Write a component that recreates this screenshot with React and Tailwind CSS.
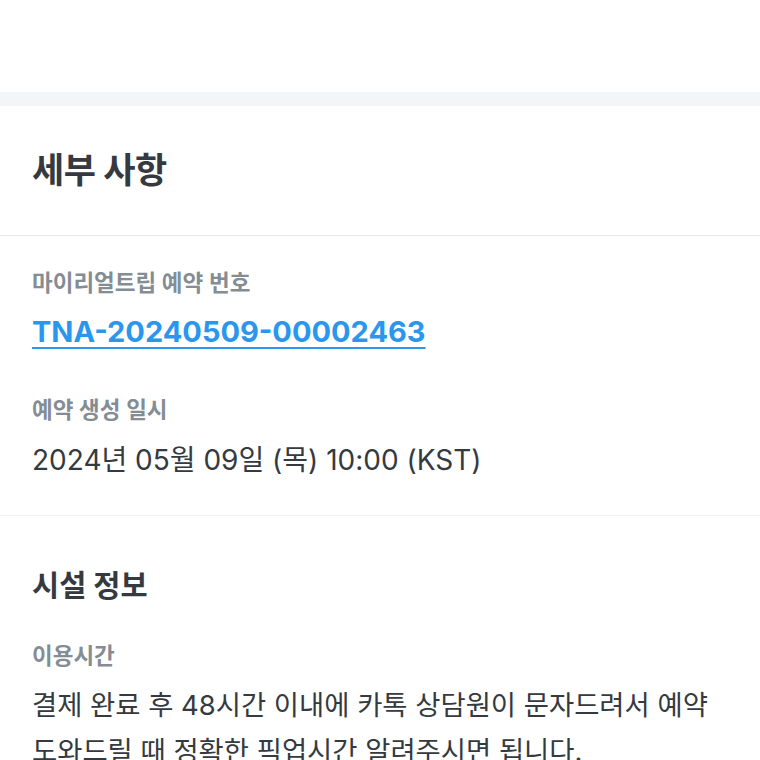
export default function App() {
  const font = { fontFamily: '"Inter", "Noto Sans CJK KR", sans-serif' };
  return (
    <div className="w-[760px] min-h-[760px] bg-white" style={font}>
      <div className="h-[92px] bg-white" />
      <div className="h-[14px] bg-[#f4f5f7]" />
      <div className="h-[130px] flex items-center px-8 border-b border-[#e6e8ea]">
        <h1 className="text-[35px] font-bold text-[#343a40] tracking-[-0.5px]">세부 사항</h1>
      </div>
      <div className="px-8 pt-[31px] pb-[37px] border-b border-[#eef0f2]">
        <div className="text-[22.5px] font-semibold text-[#848c94] leading-[32px]">마이리얼트립 예약 번호</div>
        <a className="block mt-[15px] text-[29px] font-bold text-[#2b96ed] underline underline-offset-[5px] decoration-2 leading-[36px]">TNA-20240509-00002463</a>
        <div className="mt-[44px] text-[22.5px] font-semibold text-[#848c94] leading-[32px]">예약 생성 일시</div>
        <div className="mt-[16px] text-[28px] text-[#343a40] leading-[36px]">2024년 05월 09일 (목) 10:00 (KST)</div>
      </div>
      <div className="px-8 pt-[49px]">
        <h2 className="text-[29.5px] font-bold text-[#343a40] leading-[40px]">시설 정보</h2>
        <div className="mt-[35px] text-[22.5px] font-semibold text-[#848c94] leading-[32px]">이용시간</div>
        <p className="mt-[10px] text-[27.4px] text-[#343a40] leading-[46px]">
          결제 완료 후 48시간 이내에 카톡 상담원이 문자드려서 예약<br />도와드릴 때 정확한 픽업시간 알려주시면 됩니다.
        </p>
      </div>
    </div>
  );
}
